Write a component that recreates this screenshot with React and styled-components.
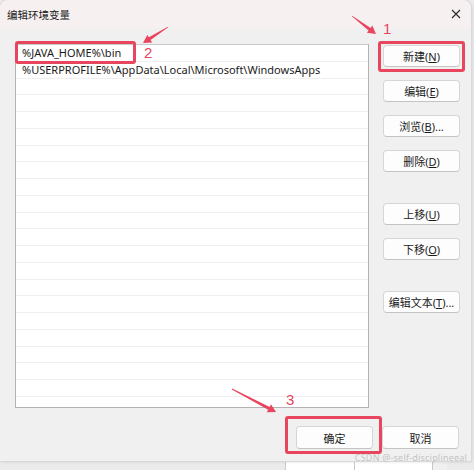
import { createGlobalStyle, styled } from "styled-components";

const RED = "#e8455f";

const GlobalStyle = createGlobalStyle`
  html, body {
    margin: 0;
    padding: 0;
  }
  body {
    width: 474px;
    height: 470px;
    overflow: hidden;
    background: #ebebeb;
    font-family: "Noto Sans", "Noto Sans CJK SC", sans-serif;
  }
`;

const Window = styled.div`
  position: relative;
  width: 471px;
  height: 461px;
  background: #f0f0f0;
  border-radius: 8px 8px 0 0;
  box-shadow: 0 0 0 1px #d9d9d9, 1px 1px 3px rgba(0, 0, 0, 0.12);
  display: flex;
  flex-direction: column;
`;

const TitleBar = styled.div`
  height: 28px;
  flex-shrink: 0;
  display: flex;
  align-items: center;
  justify-content: space-between;
  padding: 0 10px 0 7px;
  background: #f6f1f0;
  border-radius: 8px 8px 0 0;
  font-family: "Noto Sans CJK SC", sans-serif;
  font-size: 10.5px;
  color: #1a1a1a;
`;

const Content = styled.div`
  display: flex;
  gap: 14px;
  padding: 16px 11px 0 15px;
`;

const ListBox = styled.div`
  width: 354px;
  height: 364px;
  box-sizing: border-box;
  background: #ffffff;
  border: 1px solid #b3b3b3;
  border-top-color: #c8c8c8;
  overflow: hidden;
`;

const Row = styled.div`
  height: 16.75px;
  box-sizing: border-box;
  border-bottom: 1px solid #efefef;
  padding-left: 6px;
  font-size: 11px;
  line-height: 16px;
  color: #1b1b1b;
  white-space: nowrap;
`;

const SideColumn = styled.div`
  display: flex;
  flex-direction: column;
  gap: 31px;
  padding-top: 1px;
`;

const Group = styled.div`
  display: flex;
  flex-direction: column;
  gap: 13px;
`;

const Button = styled.button`
  width: 77px;
  height: ${(p) => (p.$tall ? 23 : 22)}px;
  box-sizing: border-box;
  padding: 0;
  background: #fdfdfd;
  border: 1px solid #d6d6d6;
  border-bottom-color: #c4c4c4;
  border-radius: 4px;
  font-family: "Noto Sans", "Noto Sans CJK SC", sans-serif;
  font-size: 11px;
  color: #1b1b1b;
  display: flex;
  align-items: center;
  justify-content: center;
`;

const Footer = styled.div`
  display: flex;
  justify-content: flex-end;
  gap: 9px;
  padding: 18px 12px 0 0;
`;

const Watermark = styled.div`
  position: absolute;
  right: 4px;
  bottom: -3px;
  font-family: "Noto Sans", sans-serif;
  font-size: 9px;
  color: #c4c4c4;
  letter-spacing: 0.2px;
`;

const Mark = styled.div`
  position: absolute;
  left: ${(p) => p.$x}px;
  top: ${(p) => p.$y}px;
  width: ${(p) => p.$w}px;
  height: ${(p) => p.$h}px;
  box-sizing: border-box;
  border: 3px solid ${RED};
  border-radius: 3px;
  pointer-events: none;
`;

const Num = styled.div`
  position: absolute;
  left: ${(p) => p.$x}px;
  top: ${(p) => p.$y}px;
  font-family: "Liberation Sans", sans-serif;
  font-size: 15px;
  line-height: 12px;
  color: ${RED};
`;

const ArrowLayer = styled.svg`
  position: absolute;
  left: 0;
  top: 0;
  pointer-events: none;
`;

const BottomStrip = styled.div`
  display: flex;
  height: 9px;
  padding-left: 285px;
`;

const Cell = styled.div`
  width: ${(p) => p.$w}px;
  background: ${(p) => p.$bg};
  border-left: 1px solid #c9c9c9;
`;

function arrowPoints(x1, y1, x2, y2) {
  const len = Math.hypot(x2 - x1, y2 - y1);
  const dx = (x2 - x1) / len;
  const dy = (y2 - y1) / len;
  const nx = -dy;
  const ny = dx;
  const bx = x2 - dx * 8;
  const by = y2 - dy * 8;
  const pts = [
    [x1 + nx * 0.4, y1 + ny * 0.4],
    [bx + nx * 1.6, by + ny * 1.6],
    [bx + nx * 4.5, by + ny * 4.5],
    [x2, y2],
    [bx - nx * 4.5, by - ny * 4.5],
    [bx - nx * 1.6, by - ny * 1.6],
    [x1 - nx * 0.4, y1 - ny * 0.4],
  ];
  return pts.map((p) => p.map((v) => v.toFixed(1)).join(",")).join(" ");
}

const arrows = [
  [352, 16, 376, 34],
  [168, 27, 143, 43],
  [232, 389, 276, 412],
];

const paths = ["%JAVA_HOME%\\bin", "%USERPROFILE%\\AppData\\Local\\Microsoft\\WindowsApps"];

const CloseIcon = () => (
  <svg width="10" height="10" viewBox="0 0 10 10">
    <path d="M1 1 L9 9 M9 1 L1 9" stroke="#2a2a2a" strokeWidth="1.1" />
  </svg>
);

const App = () => {
  const rows = Array.from({ length: 22 }, (_, i) => paths[i] || "");
  return (
    <>
      <GlobalStyle />
      <Window>
        <TitleBar>
          <span>编辑环境变量</span>
          <CloseIcon />
        </TitleBar>
        <Content>
          <ListBox>
            {rows.map((t, i) => (
              <Row key={i}>{t}</Row>
            ))}
          </ListBox>
          <SideColumn>
            <Group>
              <Button>新建(<u>N</u>)</Button>
              <Button>编辑(<u>E</u>)</Button>
              <Button>浏览(<u>B</u>)...</Button>
              <Button>删除(<u>D</u>)</Button>
            </Group>
            <Group>
              <Button>上移(<u>U</u>)</Button>
              <Button>下移(<u>O</u>)</Button>
            </Group>
            <Group>
              <Button>编辑文本(<u>T</u>)...</Button>
            </Group>
          </SideColumn>
        </Content>
        <Footer>
          <Button $tall>确定</Button>
          <Button $tall>取消</Button>
        </Footer>

        <Mark $x={15} $y={41} $w={121} $h={23} />
        <Mark $x={378} $y={41} $w={87} $h={31} />
        <Mark $x={285} $y={416} $w={97} $h={38} />
        <Num $x={383} $y={23}>1</Num>
        <Num $x={144} $y={47}>2</Num>
        <Num $x={286} $y={394}>3</Num>
        <ArrowLayer width="471" height="461">
          {arrows.map((a, i) => (
            <polygon key={i} points={arrowPoints(...a)} fill={RED} />
          ))}
        </ArrowLayer>
        <Watermark>CSDN @-self-disciplineeal</Watermark>
      </Window>
      <BottomStrip>
        <Cell $w={68} $bg="#ffffff" />
        <Cell $w={77} $bg="#ffffff" />
        <Cell $w={14} $bg="#f0f0f0" />
      </BottomStrip>
    </>
  );
};

export default App;
